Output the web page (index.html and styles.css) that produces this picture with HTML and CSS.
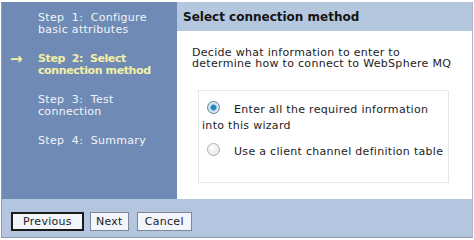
FILE: index.html
```html
<!DOCTYPE html>
<html>
<head>
<meta charset="utf-8">
<link rel="stylesheet" href="styles.css">
</head>
<body>
<div class="wizard">
  <div class="main">
    <div class="steps">
      <div class="step"><span class="marker"></span><span class="label">Step&nbsp; 1:&nbsp; Configure basic attributes</span></div>
      <div class="step current"><span class="marker">&#8594;</span><span class="label">Step&nbsp; 2:&nbsp; Select connection method</span></div>
      <div class="step"><span class="marker"></span><span class="label">Step&nbsp; 3:&nbsp; Test connection</span></div>
      <div class="step"><span class="marker"></span><span class="label">Step&nbsp; 4:&nbsp; Summary</span></div>
    </div>
    <div class="panel">
      <div class="panel-head">Select connection method</div>
      <div class="panel-body">
        <p class="intro">Decide what information to enter to determine how to connect to WebSphere MQ</p>
        <div class="options">
          <div class="option"><span class="radio checked"></span>Enter all the required information into this wizard</div>
          <div class="option"><span class="radio"></span>Use a client channel definition table</div>
        </div>
      </div>
    </div>
  </div>
  <div class="buttons">
    <button class="btn default">Previous</button>
    <button class="btn">Next</button>
    <button class="btn cancel">Cancel</button>
  </div>
</div>
</body>
</html>
```
FILE: styles.css
```css
html, body {
  margin: 0;
  padding: 0;
  background: #ffffff;
}
body {
  font-family: "DejaVu Sans", Verdana, sans-serif;
  font-size: 11px;
  letter-spacing: 0.3px;
  color: #1c1c1c;
}
.wizard {
  width: 470px;
  height: 235px;
  margin-top: 2px;
  margin-left: 1px;
  border-left: 1px solid #8f9cb0;
  border-right: 1px solid #a9b3c2;
  border-bottom: 1px solid #8f9cb0;
  display: flex;
  flex-direction: column;
}
.main {
  flex: 1;
  display: flex;
}
.steps {
  width: 175px;
  background: #6f8bb5;
  padding-top: 10px;
  box-sizing: border-box;
}
.step {
  display: flex;
  color: #f2f4f8;
  line-height: 12px;
  margin-bottom: 17px;
}
.step .marker {
  width: 36px;
  flex: none;
  box-sizing: border-box;
  padding-left: 8px;
  font-weight: bold;
  font-size: 15px;
  letter-spacing: 0;
}
.step .label {
  width: 128px;
}
.step.current {
  color: #f3f0a6;
  font-weight: bold;
  letter-spacing: -0.4px;
}
.panel {
  flex: 1;
  display: flex;
  flex-direction: column;
  background: #ffffff;
}
.panel-head {
  height: 29px;
  line-height: 30px;
  background: #b5c7df;
  font-weight: bold;
  font-size: 12px;
  letter-spacing: 0;
  padding-left: 6px;
  color: #141414;
}
.panel-body {
  padding: 16px 10px 0 15px;
}
.intro {
  margin: 0;
  line-height: 11px;
}
.options {
  margin-top: 21px;
  margin-left: 6px;
  width: 251px;
  border: 1px solid #e4e6ea;
  height: 93px;
  padding: 10px 0 0 3px;
  box-sizing: border-box;
}
.option {
  line-height: 16px;
  margin-bottom: 9px;
}
.radio {
  display: inline-block;
  width: 11px;
  height: 11px;
  border-radius: 50%;
  border: 1px solid #a9aeb5;
  background: radial-gradient(circle at 40% 35%, #ffffff, #dcdfe3);
  margin: 0 14px 0 5px;
  vertical-align: -1px;
}
.radio.checked {
  border-color: #5b7f9a;
  background: radial-gradient(circle at 50% 50%, #1f7fb0 0, #2f8fc0 2.5px, #cde3ee 3.5px, #e8f1f6 100%);
}
.buttons {
  height: 38px;
  background: #b4c6df;
  display: flex;
  align-items: flex-start;
  padding: 13px 0 0 9px;
  box-sizing: border-box;
  gap: 6px;
}
.btn {
  font-family: "DejaVu Sans", Verdana, sans-serif;
  font-size: 11px;
  letter-spacing: 0.3px;
  color: #1c1c1c;
  background: #f2f5fb;
  border: 1px solid #7d8796;
  height: 19px;
  padding: 0 5px;
  margin: 0;
}
.btn.default {
  border: 2px solid #1a1a1a;
  padding: 0 10px;
}
.btn.cancel {
  margin-left: 2px;
  padding: 0 7px;
}
```
